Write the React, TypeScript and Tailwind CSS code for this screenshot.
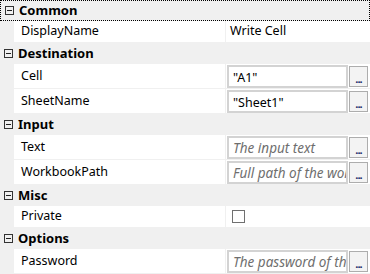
import React from "react";

const font = { fontFamily: '"Noto Sans", "Liberation Sans", sans-serif' };

function Header({ title, focused }: { title: string; focused?: boolean }) {
  return (
    <div
      className={`flex h-[21px] items-center bg-[#f0f0f0] ${
        focused ? "border border-dotted border-black" : ""
      }`}
    >
      <div className="flex w-[18px] shrink-0 items-center pl-[4px]">
        <div className="relative h-[9px] w-[9px] border border-[#333]">
          <div className="absolute left-[1px] top-[3px] h-px w-[5px] bg-[#222]" />
        </div>
      </div>
      <span className="text-[13px] font-bold text-black">{title}</span>
    </div>
  );
}

function Row({
  label,
  children,
  tall,
}: {
  label: string;
  children?: React.ReactNode;
  tall?: boolean;
}) {
  return (
    <div className={`flex ${tall ? "h-[24px]" : "h-[21px]"} mb-px`}>
      <div className="w-[14px] shrink-0 bg-[#f0f0f0]" />
      <div className="flex w-[211px] shrink-0 items-center bg-white pl-[7px] text-[12.5px] text-black">
        {label}
      </div>
      <div className="w-px shrink-0 bg-[#f0f0f0]" />
      <div className="flex min-w-0 flex-1 items-center bg-white">{children}</div>
    </div>
  );
}

function Field({ value, placeholder }: { value?: string; placeholder?: string }) {
  return (
    <div className="flex h-full w-full items-center pl-px">
      <div className="flex h-[23px] w-[121px] shrink-0 items-center overflow-hidden border-2 border-[#d3d3d3] bg-white pl-[4px]">
        <div className="min-w-0 flex-1 overflow-hidden whitespace-nowrap">
          {value ? (
            <span className="text-[12.5px] text-black">{value}</span>
          ) : (
            <span className="text-[13.5px] italic text-[#6e6e6e]">{placeholder}</span>
          )}
        </div>
      </div>
      <div className="ml-px flex h-[21px] w-[19px] shrink-0 items-end justify-center border border-[#adadad] bg-[#f3f3f3] pb-[3px]">
        <span className="text-[11px] font-bold leading-[8px] tracking-[-1px] text-[#1a2a6a]">...</span>
      </div>
    </div>
  );
}

export default function App() {
  return (
    <div className="h-[274px] w-[370px] overflow-hidden bg-[#f0f0f0]" style={font}>
      <Header title="Common" focused />
      <Row label="DisplayName">
        <span className="pl-[4px] text-[12.5px] text-black">Write Cell</span>
      </Row>
      <Header title="Destination" />
      <Row label="Cell" tall>
        <Field value={'"A1"'} />
      </Row>
      <Row label="SheetName" tall>
        <Field value={'"Sheet1"'} />
      </Row>
      <Header title="Input" />
      <Row label="Text" tall>
        <Field placeholder="The input text" />
      </Row>
      <Row label="WorkbookPath" tall>
        <Field placeholder="Full path of the workbook" />
      </Row>
      <Header title="Misc" />
      <Row label="Private">
        <div className="ml-[6px] h-[13px] w-[13px] border border-[#707070] bg-white" />
      </Row>
      <Header title="Options" />
      <Row label="Password" tall>
        <Field placeholder="The password of the workbook" />
      </Row>
    </div>
  );
}
